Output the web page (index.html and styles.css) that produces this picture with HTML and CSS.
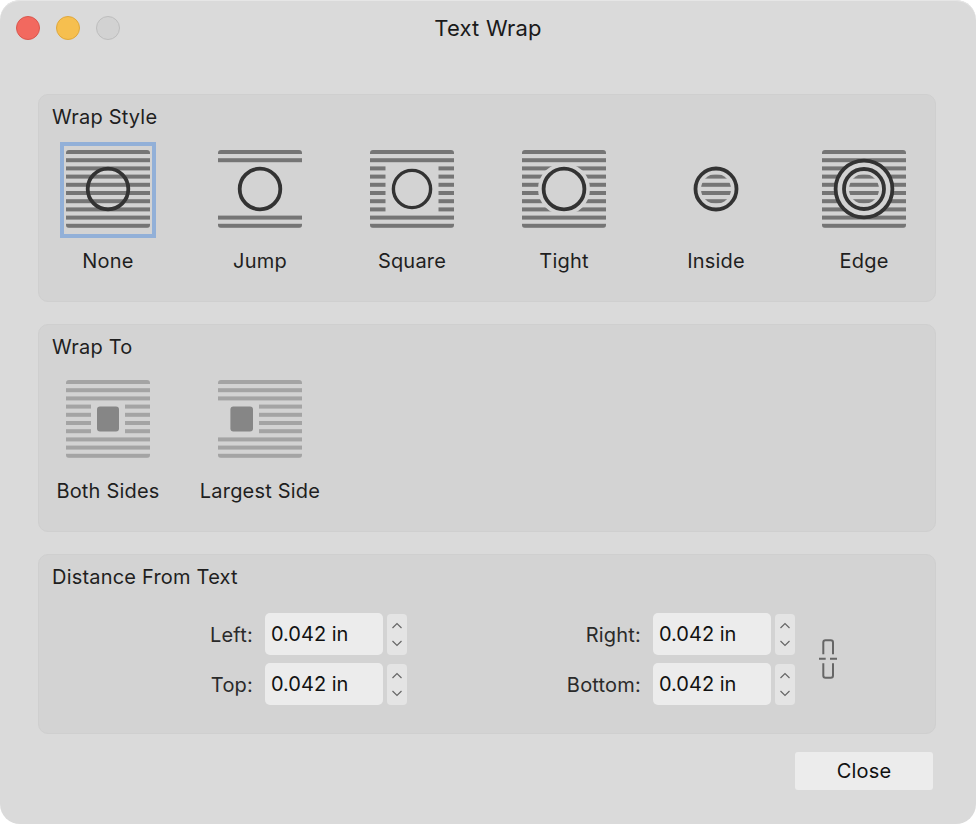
FILE: index.html
```html
<!DOCTYPE html>
<html lang="en">
<head>
    <meta charset="UTF-8" />
    <title>Text Wrap</title>
    <link rel="stylesheet" href="styles.css">
</head>
<body>
    <svg class="icon-defs" width="0" height="0">
        <defs>
            <clipPath id="box-clip"><rect width="84" height="78" rx="3" /></clipPath>
            <clipPath id="inner-clip"><circle cx="42" cy="39" r="15" /></clipPath>

            <g id="rows-top">
                <rect y="0" width="84" height="4" />
                <rect y="8.2" width="84" height="4" />
            </g>
            <g id="rows-bottom">
                <rect y="65.6" width="84" height="4" />
                <rect y="73.8" width="84" height="4" />
            </g>
            <g id="rows-middle">
                <rect y="24.6" width="84" height="4" />
                <rect y="32.8" width="84" height="4" />
                <rect y="41" width="84" height="4" />
                <rect y="49.2" width="84" height="4" />
            </g>
            <g id="rows-all">
                <use href="#rows-top" />
                <rect y="16.4" width="84" height="4" />
                <use href="#rows-middle" />
                <rect y="57.4" width="84" height="4" />
                <use href="#rows-bottom" />
            </g>
        </defs>
    </svg>

    <div class="window">
        <header class="titlebar">
            <span class="light light-close"></span>
            <span class="light light-min"></span>
            <span class="light light-zoom"></span>
            <h1>Text Wrap</h1>
        </header>

        <section class="panel">
            <h2>Wrap Style</h2>
            <div class="options style-options">
                <div class="option selected">
                    <div class="option-icon">
                        <svg width="84" height="78" viewBox="0 0 84 78">
                            <use class="bars" href="#rows-all" clip-path="url(#box-clip)" />
                            <circle class="ring" cx="42" cy="39" r="20.3" />
                        </svg>
                    </div>
                    <span>None</span>
                </div>
                <div class="option">
                    <div class="option-icon">
                        <svg width="84" height="78" viewBox="0 0 84 78">
                            <g class="bars" clip-path="url(#box-clip)">
                                <use href="#rows-top" />
                                <use href="#rows-bottom" />
                            </g>
                            <circle class="ring" cx="42" cy="39" r="20.3" />
                        </svg>
                    </div>
                    <span>Jump</span>
                </div>
                <div class="option">
                    <div class="option-icon">
                        <svg width="84" height="78" viewBox="0 0 84 78">
                            <use class="bars" href="#rows-all" clip-path="url(#box-clip)" />
                            <rect class="cutout" x="15.5" y="15.5" width="53" height="47" />
                            <circle class="ring thin" cx="42" cy="39" r="18.6" />
                        </svg>
                    </div>
                    <span>Square</span>
                </div>
                <div class="option">
                    <div class="option-icon">
                        <svg width="84" height="78" viewBox="0 0 84 78">
                            <use class="bars" href="#rows-all" clip-path="url(#box-clip)" />
                            <circle class="cutout" cx="42" cy="39" r="26" />
                            <circle class="ring" cx="42" cy="39" r="20.4" />
                        </svg>
                    </div>
                    <span>Tight</span>
                </div>
                <div class="option">
                    <div class="option-icon">
                        <svg width="84" height="78" viewBox="0 0 84 78">
                            <use class="bars" href="#rows-middle" clip-path="url(#inner-clip)" />
                            <circle class="ring" cx="42" cy="39" r="20.5" />
                        </svg>
                    </div>
                    <span>Inside</span>
                </div>
                <div class="option">
                    <div class="option-icon">
                        <svg width="84" height="78" viewBox="0 0 84 78">
                            <use class="bars" href="#rows-all" clip-path="url(#box-clip)" />
                            <circle class="cutout" cx="42" cy="39" r="28.4" />
                            <use class="bars" href="#rows-middle" clip-path="url(#inner-clip)" />
                            <circle class="ring" cx="42" cy="39" r="28.4" />
                            <circle class="ring" cx="42" cy="39" r="20" />
                        </svg>
                    </div>
                    <span>Edge</span>
                </div>
            </div>
        </section>

        <section class="panel">
            <h2>Wrap To</h2>
            <div class="options to-options">
                <div class="option">
                    <div class="option-icon">
                        <svg width="84" height="78" viewBox="0 0 84 78">
                            <use class="bars-light" href="#rows-all" clip-path="url(#box-clip)" />
                            <rect class="cutout" x="25" y="23" width="34" height="32" />
                            <rect class="block" x="31" y="26.5" width="22" height="25" rx="3" />
                        </svg>
                    </div>
                    <span>Both Sides</span>
                </div>
                <div class="option">
                    <div class="option-icon">
                        <svg width="84" height="78" viewBox="0 0 84 78">
                            <use class="bars-light" href="#rows-all" clip-path="url(#box-clip)" />
                            <rect class="cutout" x="0" y="23" width="41" height="32" />
                            <rect class="block" x="12.4" y="26.5" width="22.6" height="25" rx="3" />
                        </svg>
                    </div>
                    <span>Largest Side</span>
                </div>
            </div>
        </section>

        <section class="panel">
            <h2>Distance From Text</h2>
            <div class="distance">
                <div class="field">
                    <label>Left:</label>
                    <div class="input">0.042 in</div>
                    <div class="stepper">
                        <svg width="20" height="41" viewBox="0 0 20 41"><path d="M5.5 14 10 9.500 14.500 14M5.500 27 10 31.500 14.500 27" /></svg>
                    </div>
                </div>
                <div class="field">
                    <label>Right:</label>
                    <div class="input">0.042 in</div>
                    <div class="stepper">
                        <svg width="20" height="41" viewBox="0 0 20 41"><path d="M5.5 14 10 9.500 14.500 14M5.500 27 10 31.500 14.500 27" /></svg>
                    </div>
                </div>
                <svg class="link-icon" width="18" height="40" viewBox="0 0 18 40">
                    <path d="M4.300 15.300V3.500Q4.300 1.300 6.500 1.300h5.300Q14 1.300 14 3.500v11.800M4.300 24.300V36.500Q4.300 38.700 6.500 38.700h5.300q2.200 0 2.200-2.200V24.300M0 19.700h6.700M11 19.700h7" />
                </svg>
                <div class="field">
                    <label>Top:</label>
                    <div class="input">0.042 in</div>
                    <div class="stepper">
                        <svg width="20" height="41" viewBox="0 0 20 41"><path d="M5.5 14 10 9.500 14.500 14M5.500 27 10 31.500 14.500 27" /></svg>
                    </div>
                </div>
                <div class="field">
                    <label>Bottom:</label>
                    <div class="input">0.042 in</div>
                    <div class="stepper">
                        <svg width="20" height="41" viewBox="0 0 20 41"><path d="M5.5 14 10 9.500 14.500 14M5.500 27 10 31.500 14.500 27" /></svg>
                    </div>
                </div>
            </div>
        </section>

        <footer class="actions">
            <button>Close</button>
        </footer>
    </div>
</body>
</html>
```

FILE: styles.css
```css
* {
    box-sizing: border-box;
}

html,
body {
    margin: 0;
    padding: 0;
    background: #fff;
}

body {
    font-family: Inter, 'Liberation Sans', sans-serif;
    font-size: 20px;
    line-height: 24px;
    letter-spacing: 0.2px;
    color: #1f1f1f;
}

.icon-defs {
    display: block;
}

.window {
    width: 976px;
    height: 824px;
    padding: 0 40px 0 38px;
    background: #dadada;
    border-radius: 20px;
    box-shadow: inset 0 1px 0 #e6e6e6;
    overflow: hidden;
}

.titlebar {
    display: flex;
    align-items: center;
    gap: 16px;
    height: 56px;
    margin: 0 -40px 38px -38px;
    padding-left: 16px;
    position: relative;
}

.titlebar h1 {
    position: absolute;
    left: 0;
    right: 0;
    margin: 0;
    font-size: 22px;
    font-weight: 400;
    text-align: center;
    color: #1a1a1a;
}

.light {
    width: 24px;
    height: 24px;
    border-radius: 50%;
    border: 1px solid;
}

.light-close {
    background: #f2695f;
    border-color: #d9574e;
}

.light-min {
    background: #f6bf4f;
    border-color: #dfa73c;
}

.light-zoom {
    background: #d2d2d2;
    border-color: #bdbdbd;
}

.panel {
    padding: 10px 13px 28px;
    margin-bottom: 22px;
    background: #d3d3d3;
    border: 1px solid #cfcfcf;
    border-radius: 10px;
}

.panel h2 {
    margin: 0;
    font-size: 20px;
    font-weight: 400;
}

.options {
    display: grid;
    margin: 13px 0 0 8px;
}

.style-options {
    grid-template-columns: repeat(4, 152px) 148px 96px;
}

.to-options {
    grid-template-columns: 152px 96px;
}

.option {
    display: flex;
    flex-direction: column;
    align-items: center;
    width: 96px;
    white-space: nowrap;
}

.option span {
    margin-top: 11px;
}

.option-icon {
    display: flex;
    justify-content: center;
    flex: none;
    width: 96px;
    height: 96px;
    padding-top: 4px;
    border: 4px solid transparent;
}

.option-icon svg {
    display: block;
}

.selected .option-icon {
    border-color: #92b0d8;
}

.bars {
    fill: #757575;
}

.bars-light {
    fill: #a4a4a4;
}

.block {
    fill: #868686;
}

.cutout {
    fill: #d3d3d3;
}

.ring {
    fill: none;
    stroke: #333;
    stroke-width: 3.8;
}

.ring.thin {
    stroke-width: 3.4;
}

.distance {
    display: grid;
    grid-template-columns: 356px 388px 18px;
    row-gap: 8px;
    margin-top: 24px;
    margin-left: -1px;
}

.field {
    display: flex;
    justify-content: flex-end;
    align-items: center;
    height: 42px;
}

.field label {
    margin-right: 12px;
    padding-top: 2px;
    color: #2a2a2a;
}

.input {
    width: 118px;
    height: 42px;
    padding: 0 6px;
    line-height: 42px;
    letter-spacing: 0;
    background: #ececec;
    border-radius: 5px;
    color: #111;
}

.stepper {
    width: 20px;
    height: 41px;
    margin-left: 4px;
    background: #e4e4e4;
    border-radius: 4px;
}

.stepper svg {
    display: block;
}

.stepper path {
    fill: none;
    stroke: #666;
    stroke-width: 1.2;
}

.link-icon {
    grid-column: 3;
    grid-row: 1 / span 2;
    align-self: center;
    margin-left: 24px;
}

.link-icon path {
    fill: none;
    stroke: #666;
    stroke-width: 2;
}

.actions {
    display: flex;
    justify-content: flex-end;
    margin-top: -4px;
    padding-right: 3px;
}

.actions button {
    width: 138px;
    height: 38px;
    border: none;
    border-radius: 3px;
    background: #ececec;
    font: inherit;
    letter-spacing: inherit;
    color: #111;
}
```
